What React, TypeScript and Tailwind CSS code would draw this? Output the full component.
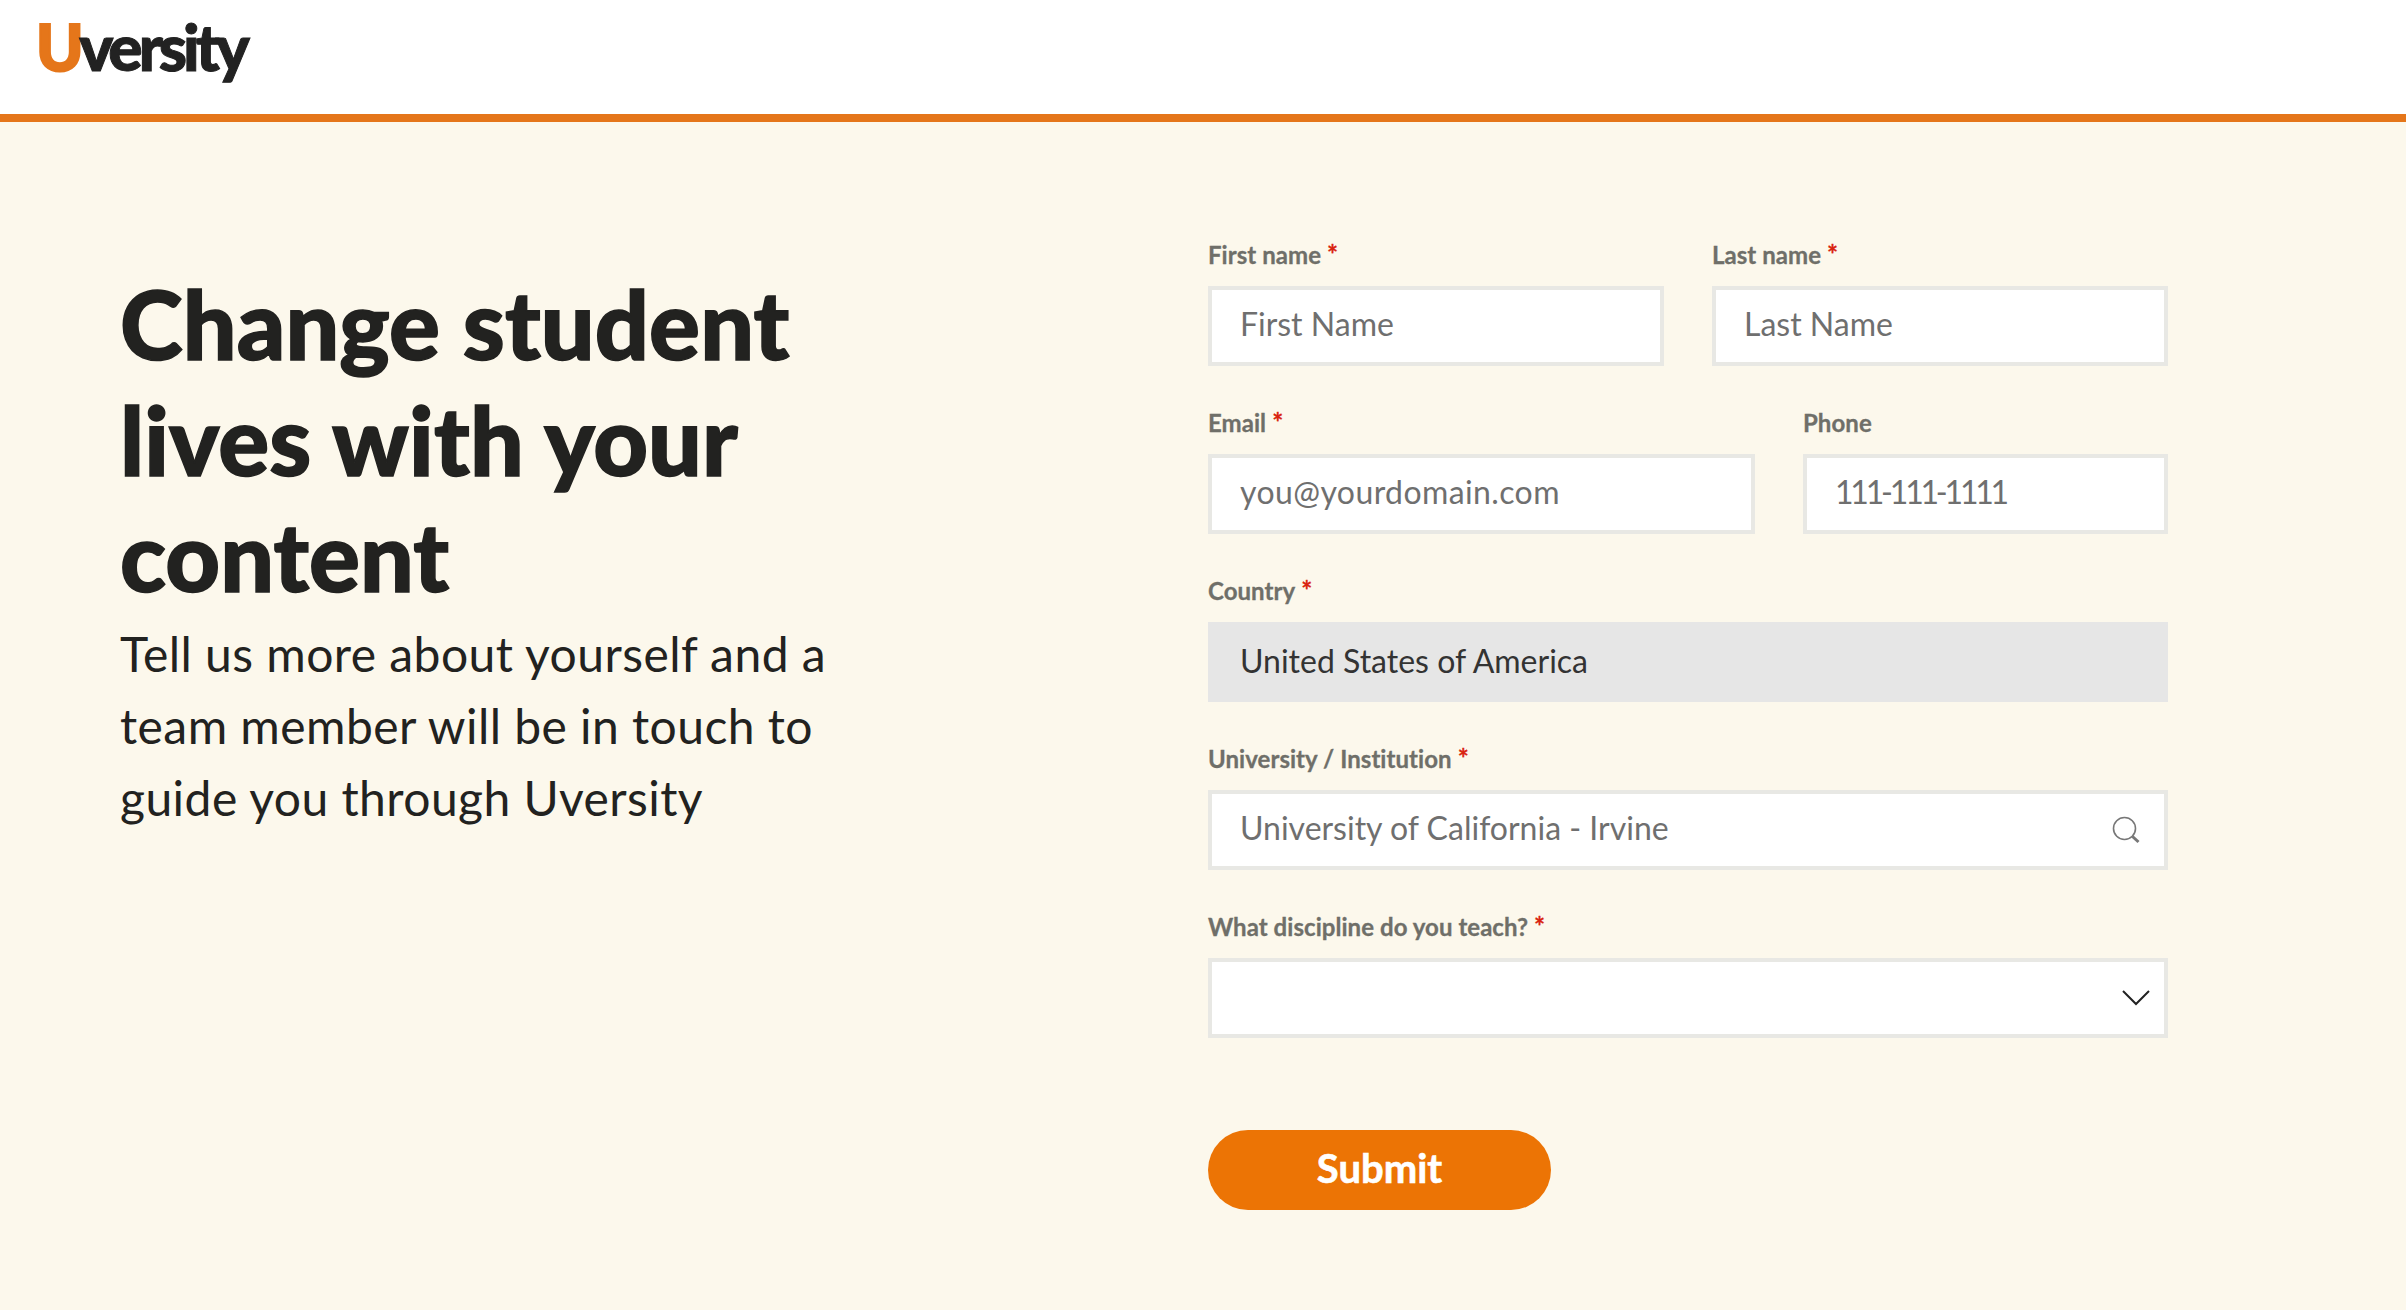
import React from "react";

const font = { fontFamily: "Lato, 'Noto Sans', sans-serif" };

function Label({ text, required = true }: { text: string; required?: boolean }) {
  return (
    <label className="block h-[32px] mb-[14px] text-[24px] leading-[29px] font-bold tracking-[0.05px] text-[#6f6f69] whitespace-nowrap [-webkit-text-stroke:0.3px_#6f6f69]">
      {text}
      {required && <span className="text-[#d9230f] ml-[6px] text-[26px] [-webkit-text-stroke:0.3px_#d9230f]">*</span>}
    </label>
  );
}

function Field({ label, placeholder, required = true, className = "", inputClass = "" }: { label: string; placeholder: string; required?: boolean; className?: string; inputClass?: string }) {
  return (
    <div className={className}>
      <Label text={label} required={required} />
      <input
        placeholder={placeholder}
        className={`block w-full h-[80px] border-4 border-[#e8e8e4] bg-white pl-[28px] pr-[28px] pb-[6px] text-[32px] outline-none placeholder:text-[#6f6f6f] ${inputClass}`}
      />
    </div>
  );
}

export default function App() {
  return (
    <div className="w-[2406px] h-[1310px] bg-[#fcf8ec] overflow-hidden flex flex-col" style={font}>
      <header className="h-[122px] shrink-0 bg-white border-b-[8px] border-[#e5761a] pl-[36px] pt-[10px]">
        <div className="text-[64px] leading-[74px] font-black tracking-[-4px] text-[#222222] [-webkit-text-stroke:1px_#222222]">
          <span className="text-[#e5761a] [-webkit-text-stroke:2px_#e5761a]">U</span>versity
        </div>
      </header>
      <main className="flex flex-1">
        <section className="w-[1208px] shrink-0 pl-[120px] pt-[143px] text-[#222220]">
          <h1 className="text-[95px] leading-[116px] font-black w-[800px] tracking-[0.1px] [-webkit-text-stroke:1.5px_#222220]">
            Change student lives with your content
          </h1>
          <p className="text-[48px] leading-[72px] w-[780px] mt-[5px] tracking-[0.45px]">
            Tell us more about yourself and a team member will be in touch to guide you through Uversity
          </p>
        </section>
        <section className="w-[960px] shrink-0 pt-[118px] flex flex-col gap-[42px]">
          <div className="grid grid-cols-2 gap-[48px]">
            <Field label="First name" placeholder="First Name" />
            <Field label="Last name" placeholder="Last Name" />
          </div>
          <div className="flex gap-[48px]">
            <Field label="Email" placeholder="you@yourdomain.com" className="w-[547px]" inputClass="tracking-[0.4px]" />
            <Field label="Phone" placeholder="111-111-1111" required={false} className="flex-1" inputClass="tracking-[-3.2px]" />
          </div>
          <div>
            <Label text="Country" />
            <div className="h-[80px] bg-[#e6e6e6] pl-[32px] pr-[32px] pb-[3px] flex items-center text-[32px] text-[#333333]">
              United States of America
            </div>
          </div>
          <div>
            <Label text="University / Institution" />
            <div className="relative">
              <input
                placeholder="University of California - Irvine"
                className="block w-full h-[80px] border-4 border-[#e8e8e4] bg-white pl-[28px] pr-[28px] pb-[6px] text-[32px] outline-none placeholder:text-[#6f6f6f]"
              />
              <svg className="absolute right-[26px] top-[25px]" width="30" height="30" viewBox="0 0 30 30" fill="none" stroke="#777">
                <circle cx="12.5" cy="13.5" r="11" strokeWidth="1.6" />
                <path d="M20.5 21.5 L26.5 27" strokeWidth="3" />
              </svg>
            </div>
          </div>
          <div>
            <Label text="What discipline do you teach?" />
            <div className="relative h-[80px] border-4 border-[#e8e8e4] bg-white">
              <svg className="absolute right-[14px] top-[27px]" width="28" height="20" viewBox="0 0 28 20" fill="none" stroke="#222" strokeWidth="2">
                <path d="M1 2 L14 15 L27 2" />
              </svg>
            </div>
          </div>
          <button className="mt-[50px] w-[343px] h-[80px] rounded-full bg-[#ec7405] text-white text-[40px] font-bold pb-[4px] [-webkit-text-stroke:0.6px_#ffffff]">
            Submit
          </button>
        </section>
      </main>
    </div>
  );
}
